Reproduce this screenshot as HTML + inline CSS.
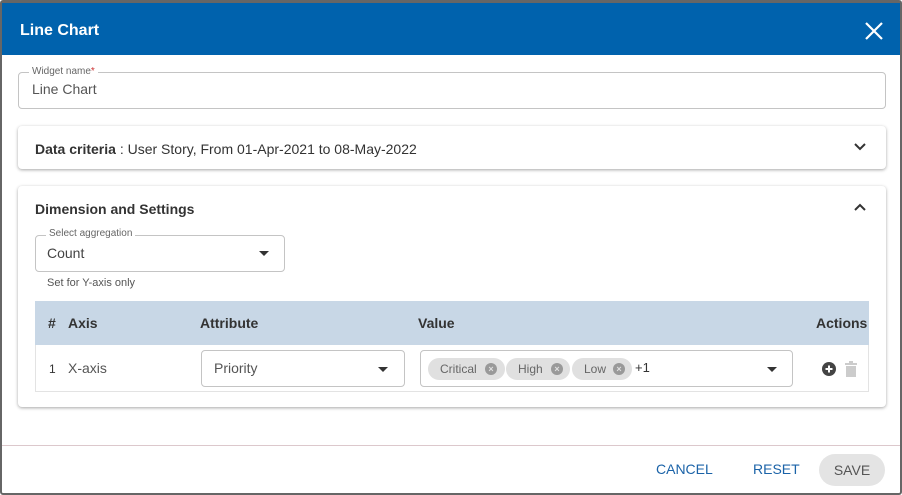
<!DOCTYPE html>
<html><head><style>
*{box-sizing:border-box;margin:0;padding:0}
body{width:902px;height:495px;background:#fff;font-family:"Liberation Sans",sans-serif;position:relative;overflow:hidden;color:#333}
.frame{position:absolute;left:0;top:0;width:902px;height:495px;border:2px solid #666;border-top-width:3px;border-radius:3px}
.hdr{position:absolute;left:2px;top:3px;width:898px;height:52px;background:#0062ad;color:#fff}
.hdr .t{position:absolute;left:18px;top:19px;font-size:16px;font-weight:bold}
.abs{position:absolute}
.card{position:absolute;left:18px;width:868px;border-radius:4px;box-shadow:0 1px 3px rgba(0,0,0,.35);background:#fff}
.fld{position:absolute;border:1px solid #c4c4c4;border-radius:4px}
.lbl{position:absolute;background:#fff;font-size:10px;color:#666;padding:0 3px}
.caret{position:absolute;width:0;height:0;border-left:5px solid transparent;border-right:5px solid transparent;border-top:5px solid #333}
.chip{position:absolute;top:358px;height:22px;background:#e0e0e0;border-radius:11px;font-size:12px;color:#666;line-height:22px;padding-left:12px}
.x{position:absolute;top:5px;width:12px;height:12px;border-radius:50%;background:#999;color:#e0e0e0;font-size:9px;line-height:12px;text-align:center;font-weight:bold}
</style></head><body>
<div class="hdr"><div class="t">Line Chart</div>
<svg class="abs" style="left:862px;top:18px" width="20" height="20" viewBox="0 0 20 20"><path d="M2 2L18 18M18 2L2 18" stroke="#fff" stroke-width="2.2"/></svg></div>

<div class="fld" style="left:18px;top:72px;width:868px;height:37px"></div>
<div class="lbl" style="left:29px;top:66px">Widget name<span style="color:#c33">*</span></div>
<div class="abs" style="left:32px;top:81px;font-size:14px;color:#555">Line Chart</div>

<div class="card" style="top:126px;height:43px"></div>
<div class="abs" style="left:35px;top:141px;font-size:14px"><b>Data criteria</b> : User Story, From 01-Apr-2021 to 08-May-2022</div>
<svg class="abs" style="left:854px;top:142px" width="12" height="10"><path d="M1 2L6 7L11 2" stroke="#333" stroke-width="2" fill="none"/></svg>

<div class="card" style="top:186px;height:221px"></div>
<div class="abs" style="left:35px;top:201px;font-size:14px;font-weight:bold">Dimension and Settings</div>
<svg class="abs" style="left:854px;top:203px" width="12" height="10"><path d="M1 7L6 2L11 7" stroke="#333" stroke-width="2" fill="none"/></svg>

<div class="fld" style="left:35px;top:235px;width:250px;height:37px"></div>
<div class="lbl" style="left:46px;top:228px">Select aggregation</div>
<div class="abs" style="left:47px;top:245px;font-size:14px;color:#444">Count</div>
<div class="caret" style="left:259px;top:251px"></div>
<div class="abs" style="left:47px;top:277px;font-size:11px;color:#555">Set for Y-axis only</div>

<div class="abs" style="left:35px;top:301px;width:834px;height:44px;background:#c8d7e6"></div>
<div class="abs" style="left:35px;top:345px;width:834px;height:47px;border:1px solid #e3e3e3;border-top:none"></div>
<div class="abs" style="top:315px;left:48px;font-size:14px;font-weight:bold">#</div>
<div class="abs" style="top:315px;left:68px;font-size:14px;font-weight:bold">Axis</div>
<div class="abs" style="top:315px;left:200px;font-size:14px;font-weight:bold">Attribute</div>
<div class="abs" style="top:315px;left:418px;font-size:14px;font-weight:bold">Value</div>
<div class="abs" style="top:315px;left:816px;font-size:14px;font-weight:bold">Actions</div>

<div class="abs" style="top:362px;left:49px;font-size:12px">1</div>
<div class="abs" style="top:360px;left:68px;font-size:14px;color:#555">X-axis</div>
<div class="fld" style="left:201px;top:350px;width:204px;height:37px"></div>
<div class="abs" style="top:360px;left:214px;font-size:14px;color:#555">Priority</div>
<div class="caret" style="left:378px;top:367px"></div>
<div class="fld" style="left:420px;top:350px;width:373px;height:37px"></div>
<div class="chip" style="left:428px;width:77px">Critical<span class="x" style="left:57px">×</span></div>
<div class="chip" style="left:506px;width:64px">High<span class="x" style="left:45px">×</span></div>
<div class="chip" style="left:572px;width:60px">Low<span class="x" style="left:41px">×</span></div>
<div class="abs" style="top:360px;left:635px;font-size:13px">+1</div>
<div class="caret" style="left:767px;top:367px"></div>
<svg class="abs" style="left:822px;top:362px" width="14" height="14" viewBox="0 0 14 14"><circle cx="7" cy="7" r="7" fill="#444"/><path d="M7 3.5V10.5M3.5 7H10.5" stroke="#fff" stroke-width="2"/></svg>
<svg class="abs" style="left:845px;top:361px" width="12" height="16" viewBox="0 0 12 16"><rect x="0" y="2" width="12" height="2" fill="#ccc"/><rect x="4" y="0" width="4" height="2" fill="#ccc"/><rect x="1" y="5" width="10" height="11" fill="#ccc"/></svg>

<div class="abs" style="left:2px;top:445px;width:898px;height:1px;background:#dcc8cc"></div>
<div class="abs" style="left:656px;top:461px;font-size:14px;color:#1b63a8">CANCEL</div>
<div class="abs" style="left:753px;top:461px;font-size:14px;color:#1b63a8">RESET</div>
<div class="abs" style="left:819px;top:454px;width:66px;height:32px;border-radius:16px;background:#e4e4e4;font-size:14px;color:#555;text-align:center;line-height:32px">SAVE</div>
<div class="frame"></div>
</body></html>
